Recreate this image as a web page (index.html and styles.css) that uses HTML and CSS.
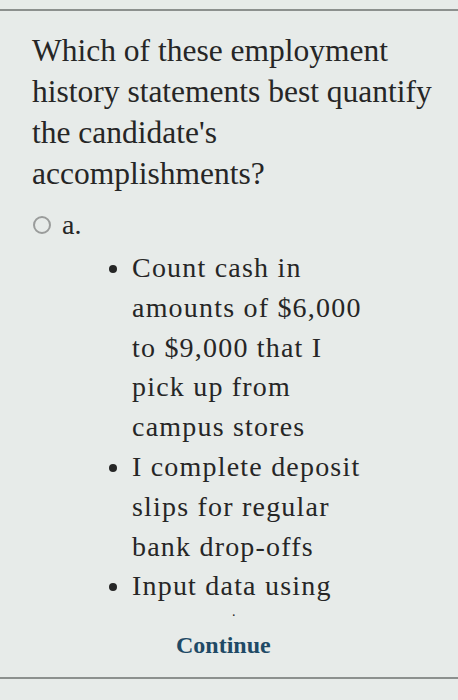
FILE: index.html
```html
<!DOCTYPE html>
<html lang="en-US">
<head>
  <meta charset="utf-8">
  <title>Question</title>
  <link rel="stylesheet" href="styles.css">
</head>
<body>
  <div class="panel">
    <p class="question">Which of these employment history statements best quantify the candidate's accomplishments?</p>

    <div class="option">
      <span class="radio"></span>
      <span class="option-label">a.</span>
    </div>

    <ul class="answer-list">
      <li>Count cash in amounts of $6,000 to $9,000 that I pick up from campus stores</li>
      <li>I complete deposit slips for regular bank drop-offs</li>
      <li>Input data using</li>
    </ul>

    <div class="more">.</div>

    <div class="continue">Continue</div>
  </div>
</body>
</html>
```

FILE: styles.css
```css
body {
  margin: 0;
  background-color: #e7ebe9;
  color: #262626;
  font-family: "Liberation Serif", "Times New Roman", serif;
}

.panel {
  margin-top: 9px;
  border-top: 2px solid #8c908e;
  border-bottom: 2px solid #8c908e;
  padding: 19px 0 17px 0;
}

.question {
  margin: 0;
  padding-left: 32px;
  width: 412px;
  font-size: 31.5px;
  line-height: 41px;
}

.option {
  display: flex;
  align-items: center;
  gap: 11px;
  margin-top: 11px;
  padding-left: 33px;
  font-size: 28px;
  line-height: 40px;
}

.radio {
  width: 14px;
  height: 14px;
  border: 2.5px solid #9a9c9b;
  border-radius: 50%;
}

.answer-list {
  margin: 3px 0 0 0;
  padding-left: 132px;
  width: 238px;
  font-size: 28px;
  letter-spacing: 1.2px;
  line-height: 39.8px;
}

.more {
  margin-left: 232px;
  font-size: 14px;
  line-height: 12px;
}

.continue {
  margin-top: 12px;
  padding-left: 176px;
  font-size: 24px;
  font-weight: bold;
  line-height: 30px;
  color: #1f4a66;
}
```
